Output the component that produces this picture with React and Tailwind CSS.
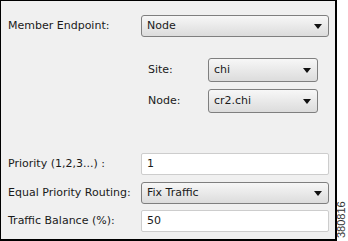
const font = { fontFamily: '"DejaVu Sans", Verdana, sans-serif' };

const Arrow = () => (
  <svg width="8" height="5" viewBox="0 0 8 5" className="shrink-0">
    <path d="M0 0h8L4 5z" fill="#111" />
  </svg>
);

const Dropdown = ({ value, className }) => (
  <div
    className={`flex items-center justify-between rounded-[3px] border border-[#7f7f7f] bg-linear-to-b from-[#f7f7f7] to-[#dcdcdc] pl-[5px] pr-[6px] text-[11px] text-[#1a1a1a] ${className}`}
  >
    <span>{value}</span>
    <Arrow />
  </div>
);

const TextBox = ({ value }) => (
  <div className="flex h-[22px] w-[188px] items-center rounded-[2px] border border-[#cdcdcd] bg-white pl-[5px] text-[11px] text-[#1a1a1a]">
    {value}
  </div>
);

const Label = ({ children, className = '' }) => (
  <div className={`text-[11px] text-[#1a1a1a] ${className}`}>{children}</div>
);

export default function App() {
  return (
    <div className="flex h-[241px] w-[348px] bg-white" style={font}>
      <div className="flex h-[241px] w-[337px] flex-col border border-r-2 border-b-2 border-black bg-[#f0f0f0] pl-[7px] pt-[14px]">
        <div className="flex h-[22px] items-center">
          <Label className="w-[133px]">Member Endpoint:</Label>
          <Dropdown value="Node" className="h-[22px] w-[188px]" />
        </div>

        <div className="mt-[21px] flex h-[24px] items-center pl-[140px]">
          <Label className="w-[60px]">Site:</Label>
          <Dropdown value="chi" className="h-[24px] w-[110px]" />
        </div>
        <div className="mt-[7px] flex h-[24px] items-center pl-[140px]">
          <Label className="w-[60px]">Node:</Label>
          <Dropdown value="cr2.chi" className="h-[24px] w-[110px]" />
        </div>

        <div className="mt-[40px] flex h-[22px] items-center">
          <Label className="w-[133px]">Priority (1,2,3...) :</Label>
          <TextBox value="1" />
        </div>
        <div className="mt-[7px] flex h-[22px] items-center">
          <Label className="w-[133px]">Equal Priority Routing:</Label>
          <Dropdown value="Fix Traffic" className="h-[22px] w-[188px]" />
        </div>
        <div className="mt-[6px] flex h-[22px] items-center">
          <Label className="w-[133px]">Traffic Balance (%):</Label>
          <TextBox value="50" />
        </div>
      </div>
      <div className="relative flex-1">
        <div
          className="absolute bottom-[3px] left-[0px] origin-bottom-left translate-x-[10px] -rotate-90 whitespace-nowrap text-[11px] leading-none text-[#333]"
          style={{ fontFamily: '"Liberation Sans", Arial, sans-serif' }}
        >
          380816
        </div>
      </div>
    </div>
  );
}
